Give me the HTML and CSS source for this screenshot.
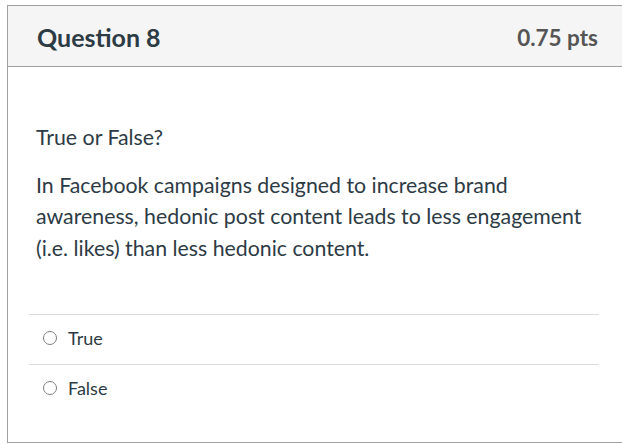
FILE: index.html
```html
<!DOCTYPE html>
<html>
<head>
<meta charset="utf-8">
<link rel="stylesheet" href="styles.css">
</head>
<body>
<div class="question">
  <div class="header">
    <h2 class="title">Question 8</h2>
    <span class="points">0.75 pts</span>
  </div>
  <div class="content">
    <p class="text">True or False?</p>
    <p class="text">In Facebook campaigns designed to increase brand awareness, hedonic post content leads to less engagement (i.e. likes) than less hedonic content.</p>
  </div>
  <div class="answers">
    <label class="answer"><span class="radio"></span><span class="label">True</span></label>
    <label class="answer"><span class="radio"></span><span class="label">False</span></label>
  </div>
</div>
</body>
</html>
```

FILE: styles.css
```css
html, body {
  margin: 0;
  padding: 0;
  background: #fff;
}
body {
  padding: 5px 0 0 7px;
  font-family: Lato, "Open Sans", sans-serif;
  color: #2d3b45;
  overflow: hidden;
}
.question {
  width: 615px;
  height: 438px;
  box-sizing: border-box;
  border: 1px solid #a0a0a0;
  border-right: none;
}
.header {
  background: #f5f5f5;
  border-bottom: 1px solid #a0a0a0;
  height: 61px;
  box-sizing: border-box;
  display: flex;
  align-items: center;
  justify-content: space-between;
  padding: 0 24px 0 29px;
}
.title {
  margin: 0;
  font-size: 25px;
  font-weight: 700;
  color: #2d3b45;
  padding-top: 2px;
}
.points {
  font-size: 22.5px;
  font-weight: 700;
  color: #555;
  padding-top: 2px;
}
.content {
  padding: 55px 0 0 28px;
  width: 565px;
}
.text {
  margin: 0 0 16px 0;
  font-size: 21.3px;
  line-height: 31.5px;
}
.answers {
  margin: 50px 0 0 21px;
  width: 570px;
}
.answer {
  display: flex;
  align-items: center;
  border-top: 1px solid #dcdcdc;
  height: 49px;
  box-sizing: content-box;
  padding: 0 0 0 14px;
}
.answer .radio,
.answer .label {
  margin-top: -3px;
}
.radio {
  width: 12px;
  height: 12px;
  border: 1px solid #808080;
  border-radius: 50%;
  margin-right: 11px;
}
.label {
  font-size: 18px;
  color: #2d3b45;
}
```
